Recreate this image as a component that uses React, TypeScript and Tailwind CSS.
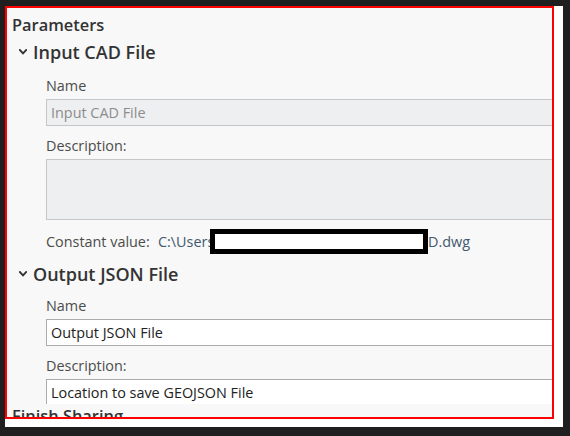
import React from "react";

function Chevron() {
  return (
    <svg width="8" height="6" viewBox="0 0 8 6" className="shrink-0">
      <polyline points="0.8,1 4,4.4 7.2,1" fill="none" stroke="#333333" strokeWidth="1.9" strokeLinecap="square" />
    </svg>
  );
}

function SectionHeader({ title, mt }: { title: string; mt: string }) {
  return (
    <div className={`flex items-center h-[24px] pl-[12px] gap-[6px] ${mt}`}>
      <Chevron />
      <span className="text-[18px] font-semibold text-[#333333] leading-[24px] whitespace-nowrap">{title}</span>
    </div>
  );
}

export default function App() {
  return (
    <div className="w-[570px] h-[436px] bg-[#1f1f1f] pt-[6px] pl-[5px] overflow-hidden">
      <div className="w-[558px] h-[421px] bg-white">
        <div className="w-[549px] h-[413px] border-2 border-[#ff0000] bg-[#f7f8f7] overflow-hidden flex flex-col font-['Open_Sans',sans-serif]">
          <div className="h-[396px] shrink-0 overflow-hidden">
            <div className="pt-[6px] pl-[5px] h-[28px] text-[16.4px] font-semibold leading-[22px] text-[#333333]">Parameters</div>

            <SectionHeader title="Input CAD File" mt="mt-[4px]" />
            <div className="pl-[39px] flex flex-col">
              <div className="mt-[12px] h-[20px] leading-[20px] text-[14.4px] text-[#4c4c4c]">Name</div>
              <div className="mt-[3px] w-[520px] h-[27px] border border-[#c6c7c8] bg-[#eeeff1] px-[4px] flex items-center text-[14.4px] text-[#8c8c8c] whitespace-nowrap">
                Input CAD File
              </div>
              <div className="mt-[10px] h-[20px] leading-[20px] text-[14.4px] text-[#4c4c4c]">Description:</div>
              <div className="mt-[3px] w-[520px] h-[61px] border border-[#c6c7c8] bg-[#eeeff1]"></div>
              <div className="mt-[9px] h-[25px] flex items-center text-[14.4px] whitespace-nowrap">
                <span className="w-[112px] text-[#4c4c4c]">Constant value:</span>
                <span className="w-[52px] text-[#44596f]">C:\Users</span>
                <span className="w-[218px] h-[25px] border-[5px] border-black bg-white shrink-0"></span>
                <span className="text-[#44596f]">D.dwg</span>
              </div>
            </div>

            <SectionHeader title="Output JSON File" mt="mt-[8px]" />
            <div className="pl-[39px] flex flex-col">
              <div className="mt-[10px] h-[20px] leading-[20px] text-[14.4px] text-[#4c4c4c]">Name</div>
              <div className="mt-[3px] w-[520px] h-[27px] border border-[#ababab] bg-white px-[4px] flex items-center text-[14.4px] text-[#222222] whitespace-nowrap">
                Output JSON File
              </div>
              <div className="mt-[10px] h-[20px] leading-[20px] text-[14.4px] text-[#4c4c4c]">Description:</div>
              <div className="mt-[3px] w-[520px] h-[27px] border border-[#ababab] bg-white px-[4px] flex items-center text-[14.4px] text-[#222222] whitespace-nowrap">
                Location to save GEOJSON File
              </div>
            </div>
          </div>
          <div className="pl-[5px] h-[24px] shrink-0 text-[16.4px] font-semibold leading-[24px] text-[#333333]">Finish Sharing</div>
        </div>
      </div>
    </div>
  );
}
